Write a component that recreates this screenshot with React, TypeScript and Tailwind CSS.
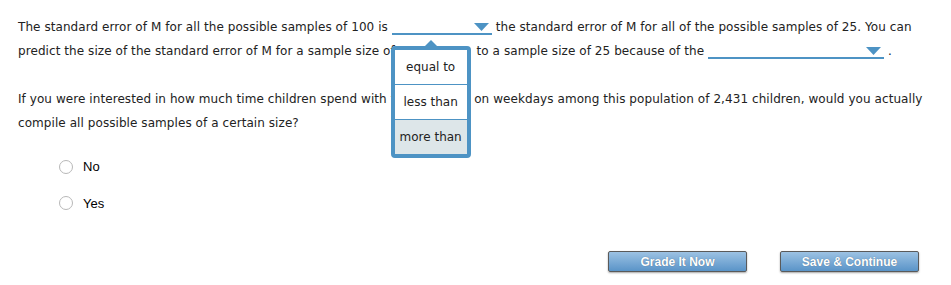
import React from "react";

const Arrow = () => (
  <svg className="absolute right-[3px] top-[6px]" width="15" height="8" viewBox="0 0 15 8">
    <polygon points="0,0 15,0 7.5,8" fill="#4d93c4" />
  </svg>
);

function Dropdown({ w }: { w: string }) {
  return (
    <span className={`relative inline-block h-[18px] border-b-2 border-[#4d93c4] align-[-4px] ${w}`}>
      <Arrow />
    </span>
  );
}

function OpenDropdown() {
  return (
    <span className="relative inline-block h-[18px] w-[74px] align-[-4px]">
      <span className="absolute left-[-8px] top-[-1px] z-10 w-[80px] tracking-normal">
        <svg className="absolute left-[33px] top-0" width="14" height="7" viewBox="0 0 14 7">
          <polygon points="7,0 14,7 0,7" fill="#4d93c4" />
        </svg>
        <span className="absolute left-0 top-[6px] flex w-[80px] flex-col overflow-hidden rounded-[4px] border-4 border-[#4d93c4] bg-white text-center">
          <span className="flex h-[35px] items-center justify-center border-b border-[#4d93c4]">equal to</span>
          <span className="flex h-[35px] items-center justify-center border-b border-[#4d93c4]">less than</span>
          <span className="flex h-[34px] items-center justify-center bg-[#dde6e9]">more than</span>
        </span>
      </span>
    </span>
  );
}

function Radio({ label }: { label: string }) {
  return (
    <div className="flex items-center gap-[10px]">
      <span className="inline-block h-[14px] w-[14px] rounded-full border border-[#b8b8b8] bg-white" />
      <span className="text-[13px] text-black" style={{ fontFamily: '"Liberation Sans", Arial, sans-serif' }}>
        {label}
      </span>
    </div>
  );
}

function Btn({ label }: { label: string }) {
  return (
    <button
      className="h-[21px] w-[139px] rounded-[2px] border border-[#5a5a5a] bg-gradient-to-b from-[#9cc2e3] to-[#5a94c8] text-[12px] font-bold text-white shadow-[0_1px_2px_rgba(0,0,0,0.35)] [text-shadow:0_0_1px_rgba(0,0,0,0.4)]"
      style={{ fontFamily: '"Liberation Sans", Arial, sans-serif' }}
    >
      {label}
    </button>
  );
}

export default function App() {
  return (
    <div className="relative h-[285px] w-[951px] bg-white text-[#222]">
      <div
        className="px-[18px] pt-[15px] text-[12px] leading-[24px] tracking-[0.07px]"
        style={{ fontFamily: '"DejaVu Sans", Verdana, sans-serif' }}
      >
        <p>
          The standard error of M for all the possible samples of 100 is <Dropdown w="w-[100px]" /> the standard error of M
          for all of the possible samples of 25. You can predict the size of the standard error of M for a sample size of{" "}
          <OpenDropdown /> to a sample size of 25 because of the <Dropdown w="w-[176px]" /> .
        </p>
        <p className="mt-[24px]">
          If you were interested in how much time children spend with their families on weekdays among this population of
          2,431 children, would you actually compile all possible samples of a certain size?
        </p>
      </div>
      <div className="mt-[22px] flex flex-col gap-[17px] pl-[59px]">
        <Radio label="No" />
        <Radio label="Yes" />
      </div>
      <div className="mt-[38px] flex justify-end gap-[33px] pr-[32px]">
        <Btn label="Grade It Now" />
        <Btn label="Save & Continue" />
      </div>
    </div>
  );
}
